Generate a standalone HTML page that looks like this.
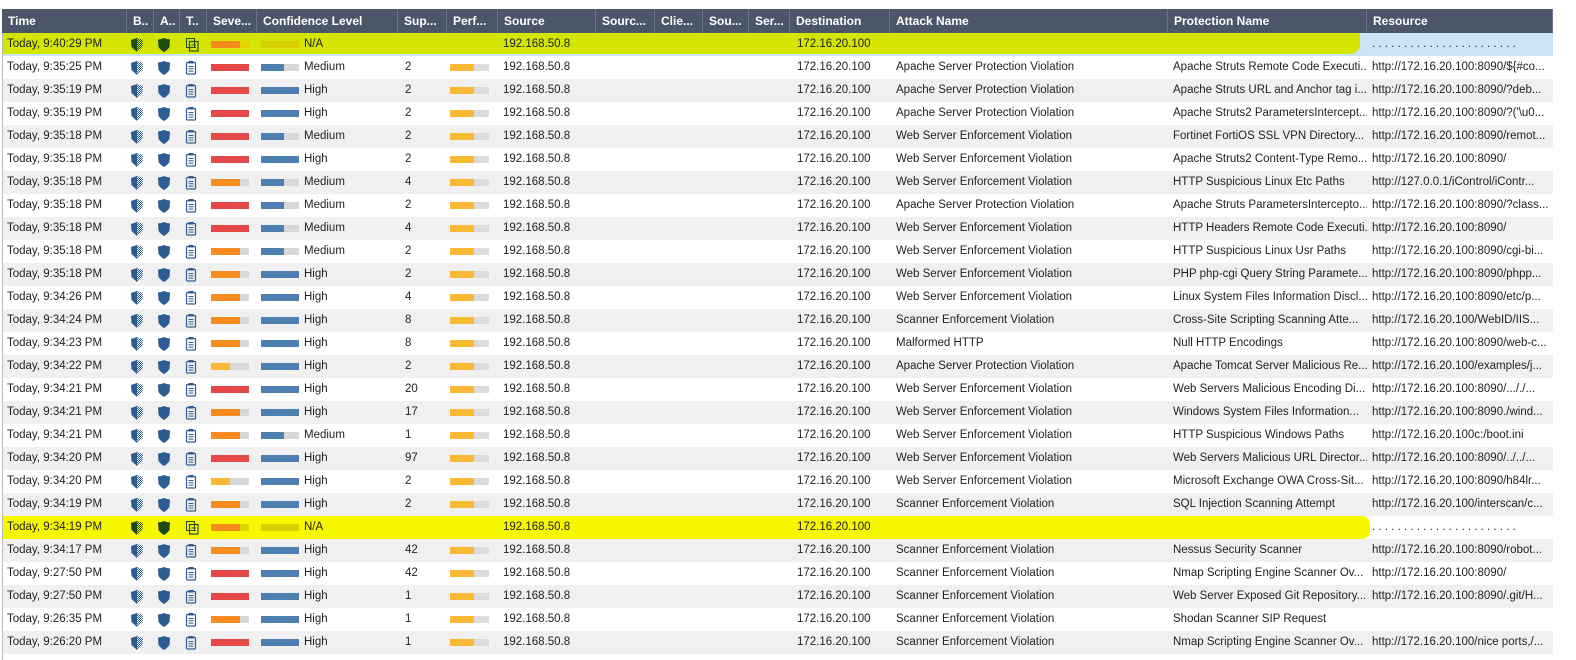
<!DOCTYPE html>
<html><head><meta charset="utf-8"><style>
body{margin:0;width:1576px;height:660px;background:#fff;font-family:"Liberation Sans",sans-serif;font-size:11.5px;color:#222;overflow:hidden;position:relative}
#hdr{position:absolute;left:2px;top:9px;width:1551px;height:24px;background:#4b5668;color:#fff;font-weight:bold;font-size:12px}
#hdr div{position:absolute;top:0;height:24px;line-height:24px;padding-left:6px;border-right:1px solid #68728a;box-sizing:border-box;white-space:nowrap;overflow:hidden}
.row{position:absolute;left:2px;width:1551px;height:23px}
.row div{position:absolute;top:0;height:23px;line-height:23px;white-space:nowrap;overflow:hidden}
.bar{position:absolute;top:8px;height:7px}
.hl{position:absolute;left:0;top:0;height:23px}
#lb{position:absolute;left:2px;top:33px;width:1px;height:627px;background:#bbb}
</style></head><body>
<div id="hdr"></div>
<div id="rows"></div>
<div id="lb"></div>
<script>
var cols=[["Time",0,125],["B..",125,27],["A..",152,26],["T..",178,27],["Seve...",205,50],["Confidence Level",255,141],["Sup...",396,49],["Perf...",445,51],["Source",496,98],["Sourc...",594,59],["Clie...",653,48],["Sou...",701,46],["Ser...",747,41],["Destination",788,100],["Attack Name",888,278],["Protection Name",1166,199],["Resource",1365,186]];
var h="";cols.forEach(function(c){h+='<div style="left:'+c[1]+'px;width:'+c[2]+'px">'+c[0]+'</div>'});
document.getElementById("hdr").innerHTML=h;
var A="Apache Server Protection Violation",W="Web Server Enforcement Violation",S="Scanner Enforcement Violation",U="http://172.16.20.100:8090/";
var d=[
["9:40:29","o","N/A","","",""," . . . . . . . . . . . . . . . . . . . . . . .",1],
["9:35:25","r","Medium","2",A,"Apache Struts Remote Code Executi...",U+"${#co..."],
["9:35:19","r","High","2",A,"Apache Struts URL and Anchor tag i...",U+"?deb..."],
["9:35:19","r","High","2",A,"Apache Struts2 ParametersIntercept...",U+"?('\\u0..."],
["9:35:18","r","Medium","2",W,"Fortinet FortiOS SSL VPN Directory...",U+"remot..."],
["9:35:18","r","High","2",W,"Apache Struts2 Content-Type Remo...",U],
["9:35:18","o","Medium","4",W,"HTTP Suspicious Linux Etc Paths","http://127.0.0.1/iControl/iContr..."],
["9:35:18","r","Medium","2",A,"Apache Struts ParametersIntercepto...",U+"?class..."],
["9:35:18","r","Medium","4",W,"HTTP Headers Remote Code Executi...",U],
["9:35:18","o","Medium","2",W,"HTTP Suspicious Linux Usr Paths",U+"cgi-bi..."],
["9:35:18","o","High","2",W,"PHP php-cgi Query String Paramete...",U+"phpp..."],
["9:34:26","o","High","4",W,"Linux System Files Information Discl...",U+"etc/p..."],
["9:34:24","o","High","8",S,"Cross-Site Scripting Scanning Atte...","http://172.16.20.100/WebID/IIS..."],
["9:34:23","o","High","8","Malformed HTTP","Null HTTP Encodings",U+"web-c..."],
["9:34:22","y","High","2",A,"Apache Tomcat Server Malicious Re...","http://172.16.20.100/examples/j..."],
["9:34:21","r","High","20",W,"Web Servers Malicious Encoding Di...",U+"..././..."],
["9:34:21","o","High","17",W,"Windows System Files Information...","http://172.16.20.100:8090./wind..."],
["9:34:21","o","Medium","1",W,"HTTP Suspicious Windows Paths","http://172.16.20.100c:/boot.ini"],
["9:34:20","r","High","97",W,"Web Servers Malicious URL Director...",U+"../../..."],
["9:34:20","y","High","2",W,"Microsoft Exchange OWA Cross-Sit...",U+"h84lr..."],
["9:34:19","o","High","2",S,"SQL Injection Scanning Attempt","http://172.16.20.100/interscan/c..."],
["9:34:19","o","N/A","","",""," . . . . . . . . . . . . . . . . . . . . . . .",2],
["9:34:17","o","High","42",S,"Nessus Security Scanner",U+"robot..."],
["9:27:50","r","High","42",S,"Nmap Scripting Engine Scanner Ov...",U],
["9:27:50","r","High","1",S,"Web Server Exposed Git Repository...",U+".git/H..."],
["9:26:35","o","High","1",S,"Shodan Scanner SIP Request",""],
["9:26:20","r","High","1",S,"Nmap Scripting Engine Scanner Ov...","http://172.16.20.100/nice ports,/..."]];
function shieldB(c){var id="p"+c.slice(1);return '<svg width="14" height="16" viewBox="0 0 14 16"><defs><pattern id="'+id+'" width="2" height="2" patternUnits="userSpaceOnUse"><rect width="1" height="1" fill="'+c+'"/><rect x="1" y="1" width="1" height="1" fill="'+c+'"/></pattern></defs><path d="M7 1 L13 3 L12.5 10 L7 15 Z" fill="url(#'+id+')"/><path d="M7 1 L1 3 L1.5 10 L7 15 Z" fill="'+c+'"/></svg>'}
function shieldA(c){return '<svg width="14" height="16" viewBox="0 0 14 16"><path d="M7 1 Q10 2.5 13 2.5 L12.5 10 Q10 13.5 7 15 Q4 13.5 1.5 10 L1 2.5 Q4 2.5 7 1 Z" fill="'+c+'"/></svg>'}
function clip(c){return '<svg width="12" height="15" viewBox="0 0 12 15"><rect x="1.5" y="2.5" width="9" height="11.5" rx="1" fill="none" stroke="'+c+'" stroke-width="1.2"/><rect x="3.5" y="1" width="5" height="2.5" fill="'+c+'"/><path d="M3.5 6.5h5M3.5 8.8h5M3.5 11.1h5" stroke="'+c+'"/></svg>'}
function clip2(c){return '<svg width="14" height="15" viewBox="0 0 14 15"><rect x="1.5" y="1.5" width="8" height="9" fill="none" stroke="'+c+'"/><rect x="4.5" y="4.5" width="8.5" height="9.5" fill="none" stroke="'+c+'" stroke-width="1.2"/><path d="M6.5 8h4.5M6.5 10.5h4.5" stroke="'+c+'"/></svg>'}
var out="";
d.forEach(function(r,i){
 var top=33+i*23,hl=r[7];
 var bg=hl==1?"#cce4f7":(i%2?"#fff":"#f0f0f0");
 if(hl==2)bg="#fff";
 var sc=r[1]=="r"?"#e44848":r[1]=="o"?"#f68c1e":"#f9b934";
 var sw=r[1]=="r"?38:r[1]=="o"?29:19;
 var ic=hl?"#1f4a12":"#2b5c94";
 var s='<div class="row" style="top:'+top+'px;background:'+bg+'">';
 if(hl==1)s+='<span class="hl" style="width:1358px;height:21px;background:#d3e500;border-radius:0 0 10px 0"></span>';
 if(hl==2)s+='<span class="hl" style="width:1368px;background:#f7f700;border-radius:0 8px 8px 0"></span>';
 s+='<div style="left:5px">Today, '+r[0]+' PM</div>';
 s+='<div style="left:128px;top:4px;height:16px">'+shieldB(ic)+'</div>';
 s+='<div style="left:155px;top:4px;height:16px">'+shieldA(ic)+'</div>';
 s+='<div style="left:183px;top:4px;height:16px">'+(hl?clip2("#2a4a20"):clip("#2b5c94"))+'</div>';
 s+='<span class="bar" style="left:209px;width:38px;background:'+(hl?"#e3d400":"#d8d8d8")+'"></span><span class="bar" style="left:209px;width:'+sw+'px;background:'+sc+'"></span>';
 if(r[2]=="N/A"){s+='<span class="bar" style="left:259px;width:38px;background:#d8cf00"></span>';}
 else{s+='<span class="bar" style="left:259px;width:38px;background:#d8d8d8"></span><span class="bar" style="left:259px;width:'+(r[2]=="High"?38:23)+'px;background:#4e7fb1"></span>';}
 s+='<div style="left:302px">'+r[2]+'</div>';
 if(r[3]){s+='<div style="left:403px">'+r[3]+'</div><span class="bar" style="left:448px;width:39px;background:#dcdcdc"></span><span class="bar" style="left:448px;width:24px;background:#f9b934"></span>';}
 s+='<div style="left:501px">192.168.50.8</div><div style="left:795px">172.16.20.100</div>';
 s+='<div style="left:894px;width:270px">'+r[4]+'</div><div style="left:1171px;width:194px">'+r[5]+'</div><div style="left:1370px;width:180px">'+r[6].replace(/</g,"&lt;")+'</div>';
 out+=s+'</div>';
});
document.getElementById("rows").innerHTML=out;
</script>
</body></html>
